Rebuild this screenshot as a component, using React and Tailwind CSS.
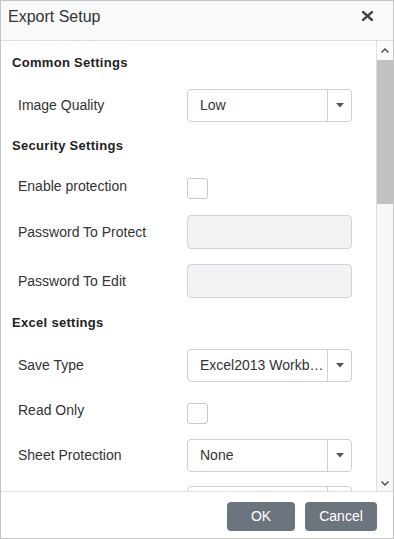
import React from "react";

const Caret = () => (
  <svg width="8" height="5" viewBox="0 0 8 5">
    <path d="M0 0 L8 0 L4 4.5 Z" fill="#555" />
  </svg>
);

const Select = ({ value }) => (
  <div className="w-[165px] h-[33px] flex border border-[#cfcfcf] rounded-[4px] bg-white">
    <div className="flex-1 min-w-0 flex items-center pl-[12px] pr-[3px]">
      <span className="truncate text-[14px] text-[#333]">{value}</span>
    </div>
    <div className="w-[24px] border-l border-[#cfcfcf] flex items-center justify-center">
      <Caret />
    </div>
  </div>
);

const Checkbox = ({ className }) => (
  <div className={"w-[21px] h-[21px] border border-[#c8c8c8] rounded-[3px] bg-white " + className} />
);

const Input = () => (
  <div className="w-[165px] h-[34px] border border-[#d3d3d3] rounded-[4px] bg-[#f2f3f5]" />
);

const Section = ({ title, className }) => (
  <div className={"h-[20px] flex items-center pl-[11px] text-[13px] font-bold tracking-[0.3px] text-[#222] " + className}>
    {title}
  </div>
);

const Row = ({ label, className, h = "h-[33px]", children }) => (
  <div className={"flex items-center " + h + " " + className}>
    <div className="w-[186px] pl-[17px] text-[14px] text-[#333]">{label}</div>
    {children}
  </div>
);

export default function App() {
  return (
    <div
      className="w-[394px] h-[539px] border border-[#c4c4c4] bg-white flex flex-col overflow-hidden"
      style={{ fontFamily: '"Liberation Sans", Arial, sans-serif' }}
    >
      {/* header */}
      <div className="h-[40px] shrink-0 bg-[#f8f9fa] border-b border-[#dcdfe3] flex justify-between items-start">
        <div className="pl-[7px] pt-[7px] text-[16px] leading-[18px] text-[#333]">Export Setup</div>
        <svg width="11" height="10" viewBox="0 0 11 10" className="mt-[10px] mr-[20px]">
          <path d="M1 1 L10 9 M10 1 L1 9" stroke="#444" strokeWidth="2.4" strokeLinecap="square" />
        </svg>
      </div>

      {/* body */}
      <div className="flex-1 flex min-h-0">
        <div className="flex-1 overflow-hidden border-r border-[#dcdfe3] pt-[12px] flex flex-col">
          <Section title="Common Settings" className="shrink-0" />
          <Row label="Image Quality" className="mt-[16px] shrink-0">
            <Select value="Low" />
          </Row>

          <Section title="Security Settings" className="mt-[14px] shrink-0" />
          <Row label="Enable protection" className="mt-[14px] shrink-0">
            <Checkbox className="mt-1" />
          </Row>
          <Row label="Password To Protect" h="h-[34px]" className="mt-[12px] shrink-0">
            <Input />
          </Row>
          <Row label="Password To Edit" h="h-[34px]" className="mt-[15px] shrink-0">
            <Input />
          </Row>

          <Section title="Excel settings" className="mt-[15px] shrink-0" />
          <Row label="Save Type" className="mt-[16px] shrink-0">
            <Select value="Excel2013 Workbook (*.xlsx)" />
          </Row>
          <Row label="Read Only" className="mt-[12px] shrink-0">
            <Checkbox className="mt-[6px]" />
          </Row>
          <Row label="Sheet Protection" className="mt-[12px] shrink-0">
            <Select value="None" />
          </Row>
          <Row label="" className="mt-[14px] shrink-0">
            <Select value="" />
          </Row>
        </div>

        {/* scrollbar */}
        <div className="w-[16px] shrink-0 bg-[#f7f7f7] flex flex-col">
          <div className="h-[19px] bg-[#fbfbfb] flex items-center justify-center">
            <svg width="8" height="5" viewBox="0 0 8 5">
              <path d="M0.5 4.5 L4 1 L7.5 4.5" fill="none" stroke="#505050" strokeWidth="1.5" />
            </svg>
          </div>
          <div className="h-[144px] bg-[#c1c1c1]" />
          <div className="flex-1" />
          <div className="h-[16px] flex items-center justify-center">
            <svg width="8" height="5" viewBox="0 0 8 5">
              <path d="M0.5 0.5 L4 4 L7.5 0.5" fill="none" stroke="#505050" strokeWidth="1.5" />
            </svg>
          </div>
        </div>
      </div>

      {/* footer */}
      <div className="h-[47px] shrink-0 border-t border-[#dcdfe3] flex justify-end items-start pt-[10px] pr-[16px] gap-[10px]">
        <button className="w-[68px] h-[29px] rounded-[4px] bg-[#6c757d] text-white text-[14px]">OK</button>
        <button className="w-[72px] h-[29px] rounded-[4px] bg-[#6c757d] text-white text-[14px]">Cancel</button>
      </div>
    </div>
  );
}
